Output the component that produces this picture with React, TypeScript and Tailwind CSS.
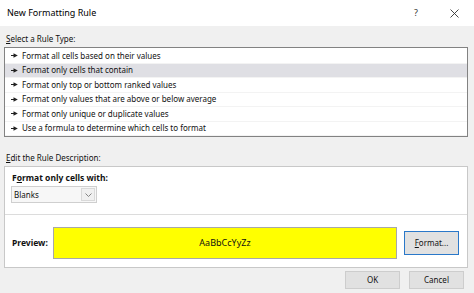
import React from "react";

const rules = [
  "Format all cells based on their values",
  "Format only cells that contain",
  "Format only top or bottom ranked values",
  "Format only values that are above or below average",
  "Format only unique or duplicate values",
  "Use a formula to determine which cells to format",
];

function Arrow() {
  return (
    <svg width="7" height="5" viewBox="0 0 7 5" className="shrink-0">
      <path d="M0 2.5H3" stroke="#222" strokeWidth="1" />
      <path d="M2.5 0.3L6.8 2.5L2.5 4.7Z" fill="#222" />
    </svg>
  );
}

export default function App() {
  return (
    <div className="w-[474px] h-[293px] bg-[#f0f0f0] flex flex-col overflow-hidden text-[8px] text-[#111] font-['Noto_Sans',sans-serif]">
      {/* title bar */}
      <div className="h-[26px] bg-white flex items-center shrink-0">
        <span className="pl-[7px] text-[9px] text-black">New Formatting Rule</span>
        <span className="ml-auto text-[9px] text-[#333] w-[10px] text-center">?</span>
        <div className="w-[20px] flex justify-center ml-[23px] mr-[10px]">
          <svg width="9" height="9" viewBox="0 0 9 9">
            <path d="M0.5 0.5L8.5 8.5M8.5 0.5L0.5 8.5" stroke="#333" strokeWidth="0.9" />
          </svg>
        </div>
      </div>

      <div className="flex flex-col pl-[4px] pr-[6px]">
        <div className="mt-[7px] pl-[2px] h-[12px] leading-[12px]">
          <span className="underline">S</span>elect a Rule Type:
        </div>
        <div className="mt-[2px] h-[90px] bg-white border border-[#828282] pt-[1px] flex flex-col">
          {rules.map((r, i) => (
            <div
              key={r}
              className={`h-[14.5px] flex items-center gap-[4px] pl-[6px] border-b border-[#f3f3f3] ${
                i === 1 ? "bg-[#dfdfe4]" : ""
              }`}
            >
              <Arrow />
              <span>{r}</span>
            </div>
          ))}
        </div>

        <div className="mt-[15px] pl-[2px] h-[12px] leading-[12px]">
          <span className="underline">E</span>dit the Rule Description:
        </div>
        <div className="mt-[2px] h-[102px] bg-white border border-[#c8c8c8] flex flex-col">
          <div className="pl-[7px] pt-[5px] font-bold text-[8.5px] h-[17px] leading-[12px]">
            F<span className="underline">o</span>rmat only cells with:
          </div>
          <div className="ml-[6px] mt-[2px] w-[86px] h-[17px] border border-[#cfcfcf] bg-[#f7f7f7] flex items-center">
            <span className="pl-[2px] flex-1">Blanks</span>
            <div className="w-[14px] h-[13px] mr-[1px] border border-[#d9d9d9] bg-[#f0f0f0] flex items-center justify-center">
              <svg width="7" height="4" viewBox="0 0 7 4">
                <path d="M0.5 0.5L3.5 3.5L6.5 0.5" stroke="#777" fill="none" strokeWidth="0.9" />
              </svg>
            </div>
          </div>
          <div className="mt-[11px] border-t border-[#dcdcdc]" />
          <div className="flex items-center mt-[12px]">
            <span className="pl-[7px] w-[48px] font-bold text-[8.5px]">Preview:</span>
            <div className="w-[344px] h-[32px] bg-[#ffff00] border border-[#a8a8a8] flex items-center justify-center text-[9px]">
              AaBbCcYyZz
            </div>
            <div className="ml-[7px] w-[55px] h-[24px] bg-[#e1e1e1] border border-[#2a78c9] flex items-center justify-center">
              <span className="underline">F</span>ormat...
            </div>
          </div>
        </div>

        <div className="mt-[3px] flex justify-end gap-[9px] pr-[4px]">
          <div className="w-[55px] h-[18px] bg-[#e1e1e1] border border-[#cdcdcd] flex items-center justify-center">
            OK
          </div>
          <div className="w-[55px] h-[18px] bg-[#e1e1e1] border border-[#cdcdcd] flex items-center justify-center">
            Cancel
          </div>
        </div>
      </div>
    </div>
  );
}
